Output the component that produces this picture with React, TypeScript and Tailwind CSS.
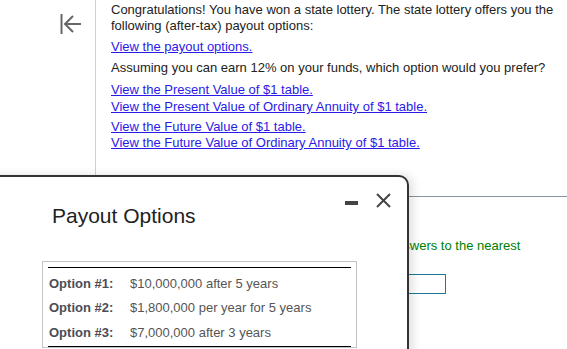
import React from "react";

const options = [
  { label: "Option #1:", value: "$10,000,000 after 5 years" },
  { label: "Option #2:", value: "$1,800,000 per year for 5 years" },
  { label: "Option #3:", value: "$7,000,000 after 3 years" },
];

function BackIcon() {
  return (
    <svg width="22" height="22" viewBox="0 0 22 22" fill="none" stroke="#666" strokeWidth="2">
      <line x1="1.5" y1="1" x2="1.5" y2="21" />
      <line x1="5" y1="11" x2="21" y2="11" />
      <polyline points="13,3 5,11 13,19" />
    </svg>
  );
}

export default function App() {
  return (
    <div className="relative h-[349px] w-[567px] overflow-hidden bg-white font-['Liberation_Sans',Arial,sans-serif] text-[13px] text-[#222]">
      <div className="flex">
        <div className="w-[95px] pl-[60px] pt-[13px]">
          <BackIcon />
        </div>
        <div className="h-[196px] flex-1 border-l border-[#cbd2dd] pl-[15px] pt-[2px] leading-[16px]">
          <p>
            Congratulations! You have won a state lottery. The state lottery offers you the following (after-tax)
            payout options:
          </p>
          <p className="mt-[5px]">
            <a href="#" className="text-[#2a1ae8] underline">View the payout options.</a>
          </p>
          <p className="mt-[5px]">Assuming you can earn 12% on your funds, which option would you prefer?</p>
          <div className="mt-[5px] flex flex-col leading-[17px]">
            <a href="#" className="text-[#2a1ae8] underline">View the Present Value of $1 table.</a>
            <a href="#" className="text-[#2a1ae8] underline">View the Present Value of Ordinary Annuity of $1 table.</a>
          </div>
          <div className="mt-[4px] flex flex-col leading-[16px]">
            <a href="#" className="text-[#2a1ae8] underline">View the Future Value of $1 table.</a>
            <a href="#" className="text-[#2a1ae8] underline">View the Future Value of Ordinary Annuity of $1 table.</a>
          </div>
        </div>
      </div>
      <div className="border-t border-[#8794a3]">
        <p className="pl-[318px] pt-[41px] leading-[16px] text-[#008000]">Round your answers to the nearest</p>
        <div className="ml-[380px] mt-[20px] h-[20px] w-[66px] border border-[#1a7a94]" />
      </div>

      <div className="absolute left-[-10px] top-[175px] h-[200px] w-[419px] rounded-tr-[10px] border-2 border-[#333] bg-white shadow-[4px_0_10px_rgba(0,0,0,0.12)]">
        <div className="flex">
          <h2 className="pl-[60px] pt-[27px] text-[21px] leading-[23px] text-[#222]">Payout Options</h2>
          <div className="ml-auto flex items-start gap-[18px] pr-[16px] pt-[16px]">
            <span className="mt-[8px] block h-[4px] w-[13px] bg-[#444]" />
            <svg width="15" height="15" viewBox="0 0 15 15" stroke="#444" strokeWidth="2">
              <line x1="1" y1="1" x2="14" y2="14" />
              <line x1="14" y1="1" x2="1" y2="14" />
            </svg>
          </div>
        </div>
        <div className="ml-[50px] mt-[34px] w-[315px] border border-[#c3c3c3] px-[5px] pt-[5px]">
          <div className="border-y-[1.5px] border-black pb-[1px] pt-[3px]">
            {options.map((o) => (
              <div key={o.label} className="flex h-[24.5px] items-center text-[13px]">
                <span className="w-[82px] pl-[1px] font-bold text-[#4a4d55]">{o.label}</span>
                <span className="text-[#555]">{o.value}</span>
              </div>
            ))}
          </div>
        </div>
      </div>
    </div>
  );
}
